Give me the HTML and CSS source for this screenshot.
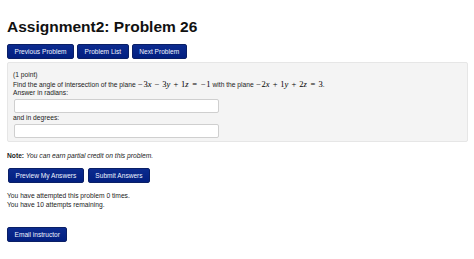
FILE: index.html
```html
<!DOCTYPE html>
<html lang="en">
  <head>
    <meta charset="UTF-8" />
    <title>Assignment2: Problem 26</title>
    <link rel="stylesheet" href="styles.css">
  </head>
  <body>
    <h1 class="title">Assignment2: Problem 26</h1>
    <nav class="nav-buttons">
      <a class="btn" href="#">Previous Problem</a>
      <a class="btn" href="#">Problem List</a>
      <a class="btn" href="#">Next Problem</a>
    </nav>

    <section class="problem">
      <div class="line">(1 point)</div>
      <div class="line">
        Find the angle of intersection of the plane
        <span class="math"><span class="neg">&minus;</span>3<i>x</i><span class="op">&minus;</span>3<i>y</i><span class="op">+</span>1<i>z</i><span class="rel">=</span><span class="neg">&minus;</span>1</span>
        with the plane
        <span class="math"><span class="neg">&minus;</span>2<i>x</i><span class="op">+</span>1<i>y</i><span class="op">+</span>2<i>z</i><span class="rel">=</span>3</span>.
      </div>
      <div class="line">Answer in radians:</div>
      <input class="answer" type="text" />
      <div class="line">and in degrees:</div>
      <input class="answer" type="text" />
    </section>

    <p class="note"><b>Note:</b> <i>You can earn partial credit on this problem.</i></p>

    <div class="submit-buttons">
      <button class="btn">Preview My Answers</button>
      <button class="btn">Submit Answers</button>
    </div>

    <div class="attempts">
      <div>You have attempted this problem 0 times.</div>
      <div>You have 10 attempts remaining.</div>
    </div>

    <button class="btn email">Email instructor</button>
  </body>
</html>
```

FILE: styles.css
```css
body {
  font-family: "Liberation Sans", Arial, sans-serif;
  font-size: 6.7px;
  color: #222222;
  background: #ffffff;
  margin: 0;
  padding: 0 7px;
}

.title {
  font-size: 15.5px;
  line-height: 18px;
  font-weight: bold;
  color: #111111;
  margin: 17.5px 0 8.5px;
}

.btn {
  display: inline-block;
  box-sizing: border-box;
  height: 15px;
  line-height: 13px;
  padding: 0 6.5px;
  font-family: "Liberation Sans", Arial, sans-serif;
  font-size: 6.6px;
  color: #eef2ff;
  text-decoration: none;
  background: linear-gradient(#0c2b8f, #021f80);
  border: 1px solid #0a1f66;
  border-radius: 2px;
}

.nav-buttons {
  display: flex;
  gap: 3px;
}

.problem {
  margin: 3px -1px 0 0;
  padding: 8px 5px 5px;
  height: 80px;
  box-sizing: border-box;
  background: #f4f4f4;
  border: 1px solid #e6e6e6;
  border-radius: 2px;
}

.line {
  line-height: 8.5px;
}

/* rough MathJax look: wide operators with thin spaces */
.math {
  font-family: "Liberation Serif", "Times New Roman", serif;
  font-size: 8.5px;
  color: #000000;
}

.math .neg,
.math .op,
.math .rel {
  display: inline-block;
  width: 0.778em;
  text-align: center;
}

.math .neg {
  width: 0.7em;
}

.math .op {
  margin: 0 0.222em;
}

.math .rel {
  margin: 0 0.278em;
}

.math i {
  padding-right: 0.05em;
}

.answer {
  display: block;
  box-sizing: border-box;
  width: 205px;
  height: 14px;
  margin: 1px 0 1.5px 1px;
  padding: 0;
  background: #ffffff;
  border: 1px solid #cfcfcf;
  border-radius: 2px;
}

.note {
  margin: 10px 0 7.5px;
  line-height: 8.5px;
}

.submit-buttons {
  display: flex;
  gap: 4px;
  margin-left: 1px;
}

.attempts {
  margin-top: 7.5px;
  line-height: 9px;
}

.email {
  height: 14.5px;
  margin-top: 18.5px;
}
```
